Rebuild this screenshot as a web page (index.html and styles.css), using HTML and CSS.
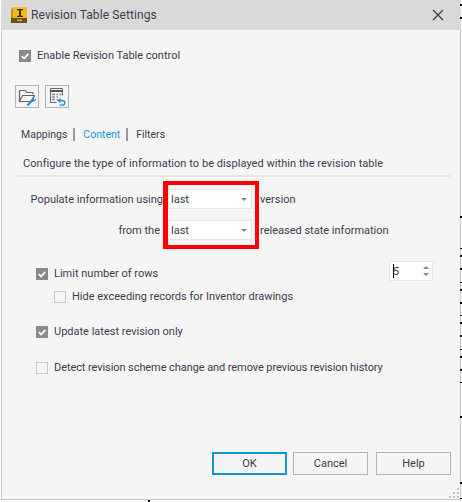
FILE: index.html
```html
<!DOCTYPE html>
<html lang="en">
<head>
<meta charset="utf-8">
<title>Revision Table Settings</title>
<link rel="stylesheet" href="styles.css">
</head>
<body>
<div class="dialog">
  <header class="titlebar">
    <svg class="app-icon" width="16" height="16" viewBox="0 0 16 16">
      <path d="M2 0h14v12H2z" fill="#f5b81c"/>
      <path d="M0 3l2-3v12H0z" fill="#c4920f"/>
      <path d="M0 11h16v5H0z" fill="#6b5312"/>
      <path d="M6 2h6v1.300h-2v5.400h2V10H6V8.700h2V3.300H6z" fill="#3c2f08"/>
      <path d="M6 12.700h5V14H6z" fill="#c9b98a"/>
    </svg>
    <span class="title">Revision Table Settings</span>
    <svg class="close" width="12" height="12" viewBox="0 0 12 12"><path d="M1 1l10 10M11 1L1 11" stroke="#333" stroke-width="1.100" fill="none"/></svg>
  </header>
  <main class="content">
    <label class="check enable"><span class="box on"><svg width="12" height="12" viewBox="0 0 12 12"><path d="M2.800 6.200l2.300 2.300 4.200-4.700" stroke="#fff" stroke-width="1.800" fill="none"/></svg></span>Enable Revision Table control</label>
    <div class="tools">
      <button class="tool">
        <svg width="22" height="22" viewBox="0 0 22 22">
          <path d="M3.500 15.500V4.500h6l1.500 2h6v2" fill="none" stroke="#666" stroke-width="1.200"/>
          <path d="M3.500 15.500l3-6h12l-2.500 6z" fill="none" stroke="#666" stroke-width="1.200"/>
          <path d="M11.500 19.500l4.500-5" stroke="#1b8fd6" stroke-width="2" fill="none"/>
          <path d="M15 14l1.500-2.500 1.500-.5-1 2 1.500 1 1.500-1.500v1.500l-2 1.500-2 .3z" fill="#1b8fd6"/>
        </svg>
      </button>
      <button class="tool">
        <svg width="22" height="22" viewBox="0 0 22 22">
          <path d="M4.500 2.500h12v7M4.500 2.500v14h6" fill="none" stroke="#666" stroke-width="1"/>
          <path d="M4.500 5h12" stroke="#555" stroke-width="2"/>
          <path d="M6 8.500h3M10.500 8.500h1.500M13.500 8.500h2M6 11h3M10.500 11h1.500M6 13.500h3M10.500 13.500h1" stroke="#888" stroke-width="1.300"/>
          <path d="M13 14.500h3.500a2.300 2.300 0 0 1 0 4.600h-3" fill="none" stroke="#1b8fd6" stroke-width="1.400"/>
          <path d="M14.500 12v5l-3.500-2.500z" fill="#1b8fd6"/>
        </svg>
      </button>
    </div>
    <nav class="tabs">
      <a class="tab">Mappings</a><i class="sep"></i><a class="tab active">Content</a><i class="sep"></i><a class="tab">Filters</a>
    </nav>
    <p class="desc">Configure the type of information to be displayed within the revision table</p>
    <section class="populate">
      <div class="row">
        <span class="lead">Populate information using</span>
        <span class="combo">last<b class="arrow"></b></span>
        <span class="tail">version</span>
      </div>
      <div class="row">
        <span class="lead">from the</span>
        <span class="combo">last<b class="arrow"></b></span>
        <span class="tail">released state information</span>
      </div>
      <div class="highlight"></div>
    </section>
    <div class="limit">
      <label class="check"><span class="box on"><svg width="12" height="12" viewBox="0 0 12 12"><path d="M2.800 6.200l2.300 2.300 4.200-4.700" stroke="#fff" stroke-width="1.800" fill="none"/></svg></span>Limit number of rows</label>
      <span class="spin"><span class="caret"></span>5<span class="spin-arrows"><b class="up"></b><b class="arrow"></b></span></span>
    </div>
    <label class="check sub"><span class="box"></span>Hide exceeding records for Inventor drawings</label>
    <label class="check update"><span class="box on"><svg width="12" height="12" viewBox="0 0 12 12"><path d="M2.800 6.200l2.300 2.300 4.200-4.700" stroke="#fff" stroke-width="1.800" fill="none"/></svg></span>Update latest revision only</label>
    <label class="check detect"><span class="box"></span>Detect revision scheme change and remove previous revision history</label>
  </main>
  <footer class="actions">
    <button class="btn primary">OK</button>
    <button class="btn">Cancel</button>
    <button class="btn">Help</button>
    <svg class="grip" width="11" height="11" viewBox="0 0 11 11"><path d="M8 0h2v2H8zM4 4h2v2H4zM8 4h2v2H8zM0 8h2v2H0zM4 8h2v2H4zM8 8h2v2H8z" fill="#c4c4c4"/></svg>
  </footer>
</div>
<svg class="edge-marks" width="2" height="502" viewBox="0 0 2 502">
  <path d="M0 4h2v2H0zM0 17h2v2H0zM0 216h2v2H0zM0 248h2v1H0zM0 255h2v2H0zM0 268h2v2H0zM0 282h2v1H0zM0 289h2v2H0zM0 302h2v2H0zM0 315h2v1H0zM0 322h2v2H0zM0 335h2v2H0zM0 349h2v1H0zM0 356h2v2H0zM0 369h2v2H0zM0 382h2v1H0zM0 416h2v2H0zM0 482h2v2H0zM0 498h2v1H0z" fill="#111"/>
</svg>
<i class="bottom-mark"></i>
</body>
</html>
```
FILE: styles.css
```css
* { box-sizing: border-box; }
html, body { margin: 0; padding: 0; background: #fff; }
body {
  position: relative;
  width: 462px;
  height: 502px;
  overflow: hidden;
  padding: 0 1px;
  font-family: Roboto, "Open Sans", sans-serif;
  font-size: 11px;
  color: #3c3c50;
}
.dialog {
  position: relative;
  width: 460px;
  height: 500px;
  background: #f5f5f5;
  border: solid #c8c8c8;
  border-width: 0 1px 1px 1px;
  display: flex;
  flex-direction: column;
}
.edge-marks { position: absolute; right: 0; top: 0; display: block; }
.bottom-mark { position: absolute; left: 148px; top: 500px; width: 2px; height: 2px; background: #111; }
.titlebar {
  height: 30px;
  flex: none;
  background: #d9d9d9;
  display: flex;
  align-items: center;
  padding: 0 17px 0 10px;
  margin: 0 -1px;
}
.app-icon { flex: none; }
.title {
  margin-left: 4px;
  font-size: 12px;
  letter-spacing: .1px;
  color: #3c3c50;
}
.close { margin-left: auto; }
.content {
  flex: 1;
  padding: 19px 9px 0 17px;
  display: flex;
  flex-direction: column;
  align-items: flex-start;
}
.check { display: flex; align-items: center; height: 14px; line-height: 14px; white-space: nowrap; }
.box {
  width: 12px;
  height: 12px;
  flex: none;
  margin-right: 6px;
  border: 1px solid #cacaca;
  background: #f5f5f5;
  position: relative;
}
.box.on { background: #8a8a8a; border-color: #8a8a8a; }
.box svg { display: block; margin: -1px; }
.tools { display: flex; gap: 6px; margin: 22px 0 0 -4px; }
.tool {
  width: 24px;
  height: 23px;
  padding: 0;
  background: #f5f5f5;
  border: 1px solid #b4b4b4;
  display: flex;
  align-items: center;
  justify-content: center;
}
.tabs { display: flex; align-items: center; margin: 18px 0 0 2px; height: 16px; font-size: 10.500px; }
.tab { color: #3c3c50; }
.tab.active { color: #1b96dc; }
.sep { width: 2px; height: 13px; background: #9a9a9a; margin: 0 8px 0 6px; }
.desc { margin: 15px 0 0 4px; height: 14px; line-height: 14px; white-space: nowrap; letter-spacing: .05px; }
.populate {
  position: relative;
  align-self: stretch;
  margin: 4px 0 0 -2px;
  border-top: 2px solid #e6e6e6;
  padding-top: 12px;
  display: flex;
  flex-direction: column;
  gap: 11px;
}
.row { display: flex; align-items: center; height: 20px; }
.lead { width: 149px; text-align: right; white-space: nowrap; padding-right: 3px; flex: none; }
.row + .row .lead { padding-right: 6px; }
.combo {
  width: 84px;
  height: 20px;
  flex: none;
  margin-left: 2px;
  background: #fff;
  border: 1px solid #e6e6e6;
  padding: 0 1px 0 2px;
  display: flex;
  align-items: center;
  justify-content: space-between;
}
.arrow, .up {
  display: block;
  width: 0;
  height: 0;
  border-left: 3.500px solid transparent;
  border-right: 3.500px solid transparent;
}
.arrow { border-top: 3.500px solid #8a8a8a; }
.up { border-bottom: 3.500px solid #8a8a8a; }
.combo .arrow { margin-right: 3px; }
.tail { margin-left: 8px; white-space: nowrap; }
.highlight {
  position: absolute;
  left: 146px;
  top: 4px;
  width: 96px;
  height: 68px;
  border: 4px solid #f00;
  border-left-width: 5px;
}
.limit {
  align-self: stretch;
  display: flex;
  align-items: flex-start;
  justify-content: space-between;
  margin: 21px 18px 0 17px;
  height: 20px;
}
.limit .check { margin-top: 6px; }
.spin {
  width: 44px;
  height: 20px;
  background: #fff;
  border: 1px solid #e6e6e6;
  position: relative;
  display: flex;
  align-items: center;
  padding-left: 3px;
}
.caret { position: absolute; left: 3px; top: 2px; width: 1px; height: 14px; background: #000; }
.spin-arrows { margin-left: auto; margin-right: 3px; display: flex; flex-direction: column; gap: 4px; }
.sub { margin: 9px 0 0 35px; }
.update { margin: 21px 0 0 17px; }
.detect { margin: 22px 0 0 17px; letter-spacing: -.08px; }
.actions {
  position: relative;
  flex: none;
  height: 47px;
  display: flex;
  align-items: flex-start;
  gap: 6px;
  padding-left: 210px;
}
.btn {
  width: 75px;
  height: 23px;
  padding: 0;
  font: inherit;
  color: #3c3c50;
  background: #f5f5f5;
  border: 1px solid #b4b4b4;
}
.btn + .btn + .btn { margin-left: 2px; }
.btn.primary { border: 2px solid #0f96d8; }
.grip { position: absolute; right: 0; bottom: 0; }
```
